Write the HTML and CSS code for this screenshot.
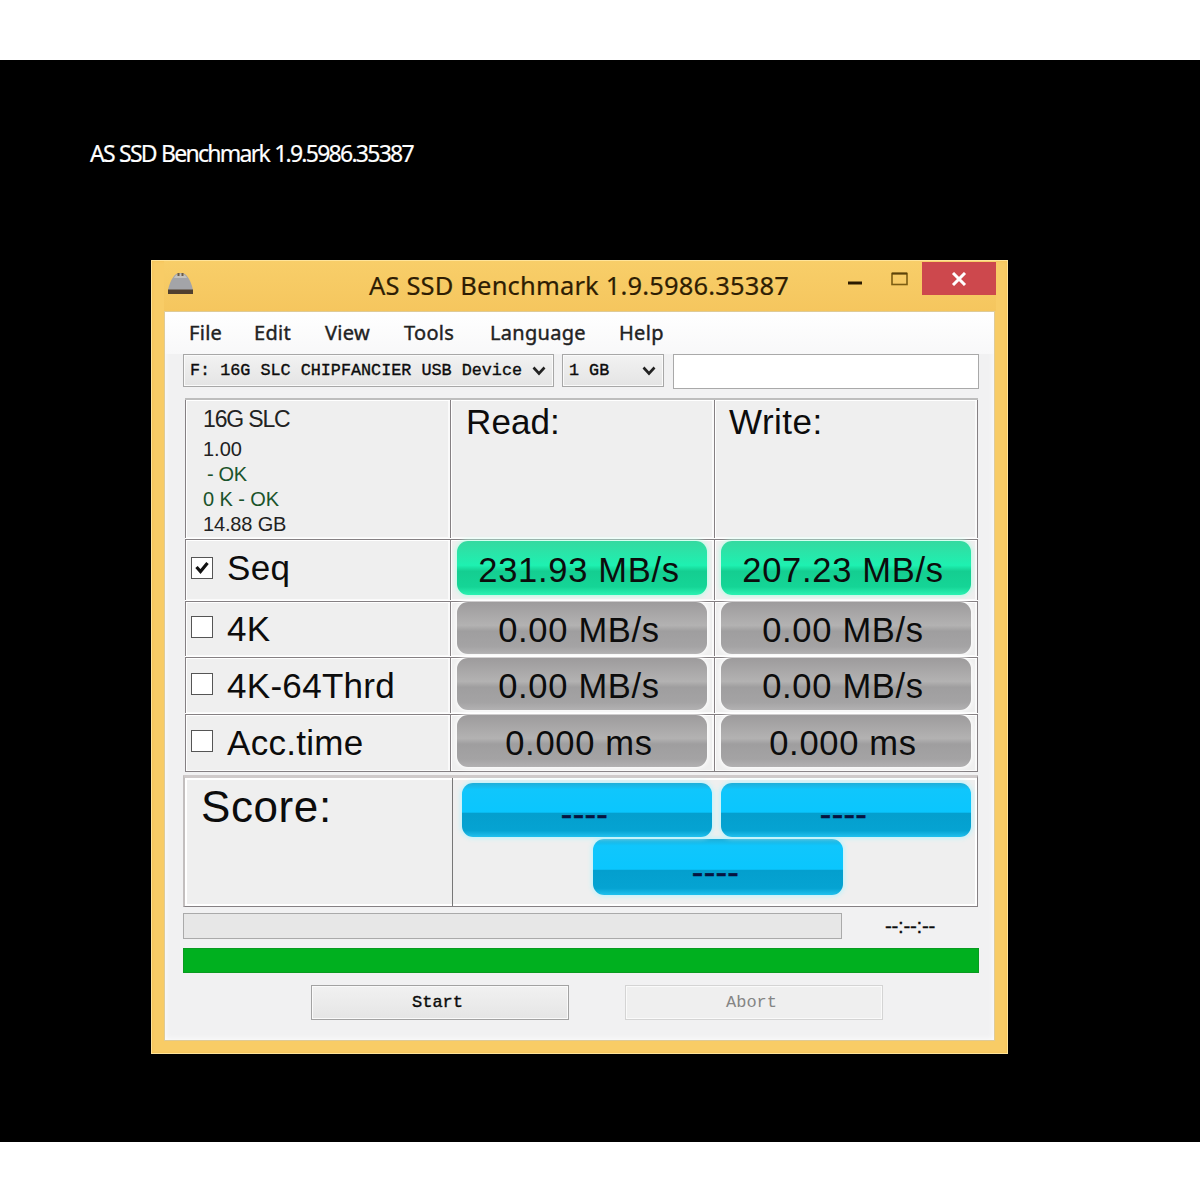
FILE: index.html
```html
<!DOCTYPE html>
<html lang="en">
<head>
<meta charset="utf-8">
<title>AS SSD Benchmark</title>
<link rel="stylesheet" href="styles.css">
</head>
<body>
<main class="desktop">
  <h1 class="caption">AS SSD Benchmark 1.9.5986.35387</h1>
  <section class="window">
    <header class="titlebar">
      <svg class="app-icon" width="28" height="25" viewBox="0 0 28 25">
        <path d="M1 18Q3 9 7 4Q9 1 13.500 1Q18 1 20 4Q24 9 26 18Z" fill="#a3a4a8"/>
        <path d="M7 6Q9 1.500 13.500 1.500Q18 1.500 20 6Z" fill="#c4c2bd"/>
        <path d="M10.500 1h2v3h-2zM14.500 1h2v3h-2z" fill="#6b5b45"/>
        <path d="M1 17.500H26V22H1Z" fill="#51402f"/>
      </svg>
      <span class="title">AS SSD Benchmark 1.9.5986.35387</span>
      <div class="controls">
        <svg width="62" height="34" viewBox="0 0 62 34">
          <path d="M1 21H15" stroke="#2b1a00" stroke-width="3"/>
          <rect x="45" y="11.500" width="15" height="11" fill="none" stroke="#7c5d12" stroke-width="1.600"/>
          <path d="M45 11.500H60" stroke="#5c430a" stroke-width="2"/>
        </svg>
        <div class="close">
          <svg width="16" height="14" viewBox="0 0 16 14"><path d="M2 1L14 13M14 1L2 13" stroke="#fff" stroke-width="3"/></svg>
        </div>
      </div>
    </header>
    <div class="client">
      <nav class="menu"><span>File</span><span>Edit</span><span>View</span><span>Tools</span><span>Language</span><span>Help</span></nav>
      <div class="selectors">
        <div class="combo drive"><span>F: 16G SLC CHIPFANCIER USB Device</span><svg width="14" height="10" viewBox="0 0 14 10"><path d="M1.500 1.500L7 7.500L12.500 1.500" fill="none" stroke="#222" stroke-width="2.600"/></svg></div>
        <div class="combo size"><span>1 GB</span><svg width="14" height="10" viewBox="0 0 14 10"><path d="M1.500 1.500L7 7.500L12.500 1.500" fill="none" stroke="#222" stroke-width="2.600"/></svg></div>
        <div class="field"></div>
      </div>
      <div class="results">
        <div class="row head">
          <div class="cell info"><span class="model">16G SLC</span><span class="fw">1.00</span><span class="ok indent">- OK</span><span class="ok align">0 K - OK</span><span class="cap">14.88 GB</span></div>
          <div class="cell heading">Read:</div>
          <div class="cell heading write">Write:</div>
        </div>
        <div class="row seq">
          <div class="cell test"><i class="box"><svg width="18" height="18" viewBox="0 0 18 18"><path d="M3.500 8L7.500 12.500L14.500 4" fill="none" stroke="#111" stroke-width="3.200"/></svg></i><span>Seq</span></div>
          <div class="cell"><div class="pill green">231.93 MB/s</div></div>
          <div class="cell"><div class="pill green">207.23 MB/s</div></div>
        </div>
        <div class="row r4k">
          <div class="cell test"><i class="box"></i><span>4K</span></div>
          <div class="cell"><div class="pill gray">0.00 MB/s</div></div>
          <div class="cell"><div class="pill gray">0.00 MB/s</div></div>
        </div>
        <div class="row r64">
          <div class="cell test"><i class="box"></i><span>4K-64Thrd</span></div>
          <div class="cell"><div class="pill gray">0.00 MB/s</div></div>
          <div class="cell"><div class="pill gray">0.00 MB/s</div></div>
        </div>
        <div class="row acc">
          <div class="cell test"><i class="box"></i><span>Acc.time</span></div>
          <div class="cell"><div class="pill gray">0.000 ms</div></div>
          <div class="cell"><div class="pill gray">0.000 ms</div></div>
        </div>
      </div>
      <div class="score">
        <div class="score-label">Score:</div>
        <div class="score-values">
          <div class="pair"><div class="pill blue">----</div><div class="pill blue">----</div></div>
          <div class="pill blue total">----</div>
        </div>
      </div>
      <div class="status"><div class="progress"></div><span class="time">--:--:--</span></div>
      <div class="bar"></div>
      <div class="actions"><div class="button">Start</div><div class="button disabled">Abort</div></div>
    </div>
  </section>
</main>
</body>
</html>
```
FILE: styles.css
```css
* { box-sizing: border-box; }
body { margin: 0; padding-top: 60px; height: 1200px; background: #fff; font-family: "Liberation Sans", Arial, sans-serif; color: #0c0c0c; overflow: hidden; }
.desktop { height: 1082px; background: #000; padding: 76px 0 0 90px; }
.caption { margin: 0; height: 124px; font: 400 23px/34px "Noto Sans", sans-serif; letter-spacing: -1.750px; word-spacing: 1px; color: #fff; white-space: nowrap; -webkit-text-stroke: 0.200px; }
.window { width: 857px; height: 794px; margin-left: 61px; background: #f8cc66; border: 1px solid #ffe49a; padding: 0 12px 12px; box-shadow: inset 0 0 3px #f2bf50; }
.titlebar { height: 50px; display: flex; align-items: flex-start; background: linear-gradient(#f8ce69, #f5c65e); margin-right: -1px; }
.app-icon { margin: 11px 0 0 3px; }
.title { margin-left: 174px; width: 420px; font: 400 25.500px/49px "Noto Sans", sans-serif; letter-spacing: 0.170px; white-space: nowrap; color: #2e1d03; -webkit-text-stroke: 0.200px; }
.controls { display: flex; margin-left: 58px; }
.controls > svg { margin-top: 1px; }
.close { width: 74px; height: 33px; margin: 1px 0 0 13px; background: #cd484d; display: flex; align-items: center; justify-content: center; }
.client { width: 831px; height: 730px; background: #f1f1f2; border: 1px solid #dfcb97; padding-left: 18px; box-shadow: inset 0 0 6px #fff; }
.menu { display: grid; grid-template-columns: 65px 71px 79px 86px 129px 60px; height: 42px; margin-left: -18px; padding-left: 24px; font: 400 20px/41px "Noto Sans", sans-serif; letter-spacing: 0.300px; background: linear-gradient(#fff, #f8f8f9); color: #222; -webkit-text-stroke: 0.400px; }
.selectors { display: flex; height: 44px; align-items: flex-start; }
.combo { height: 33px; display: flex; align-items: center; justify-content: space-between; border: 1px solid #a7a7a7; background: linear-gradient(#f2f2f2, #e4e4e4); font: 400 16.770px/30px "Liberation Mono", monospace; white-space: pre; padding: 0 7px 0 6px; box-shadow: inset 0 0 0 1px #fafafa; -webkit-text-stroke: 0.350px; }
.drive { width: 371px; margin-right: 8px; }
.size { width: 102px; margin-right: 9px; }
.field { width: 306px; height: 35px; border: 1px solid #a9a9a9; background: #fff; }
.results { width: 794px; height: 374px; margin-left: 2px; }
.row { display: grid; grid-template-columns: 265px 264px 264px; border-top: 1px solid #858083; border-bottom: 1px solid #fff; width: 793px; }
.cell { border-left: 1px solid #858083; box-shadow: inset 1px 1px 0 #fff, inset -2px -1px 0 #fafafa; background: #efefef; padding-left: 6px; }
.cell:last-child { border-right: 1px solid #858083; }
.head { height: 141px; border-top: 2px solid #bdbdbd; }
.seq { height: 62px; }
.r4k { height: 56px; }
.r64 { height: 57px; }
.acc { height: 58px; border-bottom: 1px solid #858083; }
.info { display: flex; flex-direction: column; padding-left: 17px; font-size: 20px; line-height: 25px; color: #222; white-space: pre; }
.model { font-size: 23px; line-height: 34px; height: 37px; letter-spacing: -1.150px; padding-top: 2px; }
.ok { color: #1a532b; letter-spacing: -0.100px; }
.indent { padding-left: 4px; letter-spacing: -0.300px; }
.cap { letter-spacing: -0.150px; }
.heading { font-size: 35px; line-height: 43px; padding-left: 15px; letter-spacing: 0.100px; }
.write { padding-left: 14px; letter-spacing: 0.500px; }
.test { display: flex; align-items: center; font-size: 35px; padding: 0 0 4px 5px; letter-spacing: 0.300px; }
.test span { margin-top: 4px; }
.seq .test span { margin-top: 0; }
.box { width: 22px; height: 22px; border: 1.500px solid #555; background: #fff; margin-right: 14px; display: flex; align-items: center; justify-content: center; }
.pill { width: 250px; height: 52px; border-radius: 11px; display: flex; align-items: center; justify-content: center; font-size: 34.500px; padding: 5px 6px 0 0; letter-spacing: 0.700px; box-shadow: 0 0 4px 1px #fff; }
.green { height: 54px; margin-top: 1px; background: linear-gradient(#35d9a0, #1ef1b1 45%, #14ce91 56%, #15d596 85%, #2bf2b2); box-shadow: 0 0 4px 1px #b8ffe6; }
.gray { background: linear-gradient(#9d9b9c, #b3b2b2 45%, #9f9e9f 56%, #a4a3a4 85%, #b2b1b2); }
.score { width: 795px; height: 132px; margin-top: 3px; display: flex; border: 1px solid #858083; border-top: 3px solid #cfcaca; border-left: 2px solid #c2bebe; background: #efefef; box-shadow: inset 0 0 0 2px #fff; }
.score-label { width: 267px; padding: 1px 0 0 16px; font-size: 44px; line-height: 56px; letter-spacing: 0.600px; }
.score-values { width: 524px; border-left: 1px solid #777; padding: 5px 0 0 9px; }
.pair { display: flex; gap: 9px; }
.blue { height: 54px; background: linear-gradient(#20aed8 0, #10c6fc 12%, #0ac6fe 54%, #049fce 56%, #05a3d2 88%, #20c0ee); box-shadow: 0 0 5px 1px #b5f4ff; color: #071440; padding: 8px 5px 0 0; letter-spacing: 0.350px; -webkit-text-stroke: 0.500px; }
.total { margin: 2px 0 0 131px; height: 56px; padding-top: 11px; }
.status { display: flex; margin-top: 6px; height: 35px; }
.progress { width: 659px; height: 26px; background: #e7e7e7; border: 1px solid #aaa; }
.time { margin-left: 43px; font: 400 20.500px/25px "Liberation Sans", sans-serif; letter-spacing: -0.300px; -webkit-text-stroke: 0.300px; }
.bar { width: 796px; height: 25px; background: #00b01f; border: 1px solid #099b20; }
.actions { display: flex; gap: 56px; margin: 12px 0 0 128px; }
.button { width: 258px; height: 35px; border: 1px solid #a2a2a2; background: linear-gradient(#f1f1f1, #e5e5e5); display: flex; align-items: center; justify-content: center; font: 400 17px/30px "Liberation Mono", monospace; padding-right: 5px; -webkit-text-stroke: 0.400px; box-shadow: inset 0 0 0 1px #fafafa; }
.disabled { background: #efefef; border-color: #d4d4d4; color: #858585; -webkit-text-stroke: 0; }
```
